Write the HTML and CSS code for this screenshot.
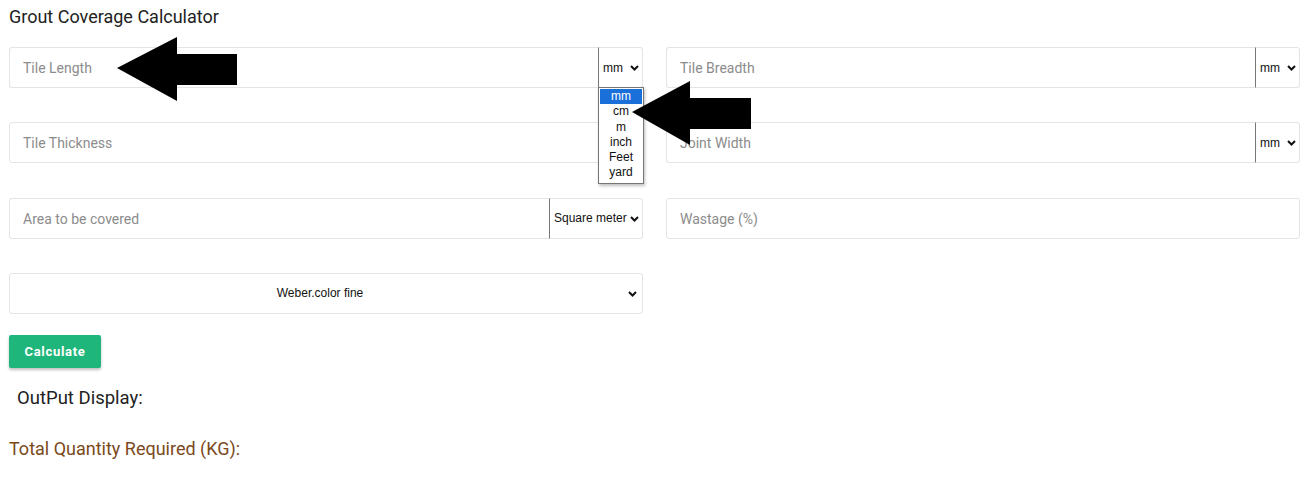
FILE: index.html
```html
<!DOCTYPE html>
<html lang="en">
<head>
<meta charset="utf-8">
<title>Grout Coverage Calculator</title>
<link rel="stylesheet" href="styles.css">
</head>
<body>
<div class="page">
  <h1 class="title">Grout Coverage Calculator</h1>
  <form class="grid">
    <div class="field">
      <div class="group">
        <input class="input" type="text" placeholder="Tile Length">
        <span class="unit-wrap unit-sm">
          <select class="unit"><option>mm</option><option>cm</option><option>m</option><option>inch</option><option>Feet</option><option>yard</option></select>
          <svg class="chev" width="9" height="6" viewBox="0 0 9 6"><path d="M1 1 L4.5 4.5 L8 1" fill="none" stroke="#111" stroke-width="2"/></svg>
        </span>
      </div>
      <div class="listbox">
        <div class="opt sel">mm</div>
        <div class="opt">cm</div>
        <div class="opt">m</div>
        <div class="opt">inch</div>
        <div class="opt">Feet</div>
        <div class="opt">yard</div>
      </div>
    </div>
    <div class="field">
      <div class="group">
        <input class="input" type="text" placeholder="Tile Breadth">
        <span class="unit-wrap unit-sm">
          <select class="unit"><option>mm</option><option>cm</option><option>m</option><option>inch</option><option>Feet</option><option>yard</option></select>
          <svg class="chev" width="9" height="6" viewBox="0 0 9 6"><path d="M1 1 L4.5 4.5 L8 1" fill="none" stroke="#111" stroke-width="2"/></svg>
        </span>
      </div>
    </div>
    <div class="field">
      <div class="group">
        <input class="input" type="text" placeholder="Tile Thickness">
      </div>
    </div>
    <div class="field">
      <div class="group">
        <input class="input" type="text" placeholder="Joint Width">
        <span class="unit-wrap unit-sm">
          <select class="unit"><option>mm</option><option>cm</option><option>m</option><option>inch</option><option>Feet</option><option>yard</option></select>
          <svg class="chev" width="9" height="6" viewBox="0 0 9 6"><path d="M1 1 L4.5 4.5 L8 1" fill="none" stroke="#111" stroke-width="2"/></svg>
        </span>
      </div>
    </div>
    <div class="field">
      <div class="group">
        <input class="input" type="text" placeholder="Area to be covered">
        <span class="unit-wrap unit-lg">
          <select class="unit"><option>Square meter</option><option>Square feet</option></select>
          <svg class="chev" width="9" height="6" viewBox="0 0 9 6"><path d="M1 1 L4.5 4.5 L8 1" fill="none" stroke="#111" stroke-width="2"/></svg>
        </span>
      </div>
    </div>
    <div class="field">
      <div class="group">
        <input class="input" type="text" placeholder="Wastage (%)">
      </div>
    </div>
    <div class="field">
      <span class="unit-wrap product-wrap">
        <select class="product"><option>Weber.color fine</option></select>
        <svg class="chev" width="9" height="6" viewBox="0 0 9 6"><path d="M1 1 L4.5 4.5 L8 1" fill="none" stroke="#111" stroke-width="2"/></svg>
      </span>
    </div>
  </form>
  <button class="btn" type="button">Calculate</button>
  <p class="output">OutPut Display:</p>
  <p class="total">Total Quantity Required (KG):</p>

  <svg class="annot" width="1311" height="479" viewBox="0 0 1311 479" aria-hidden="true">
    <polygon points="117,68 177,37 177,54 237,54 237,85 177,85 177,101" fill="#000"/>
    <polygon points="632,112 690,81 690,98 751,98 751,129 690,129 690,145" fill="#000"/>
  </svg>
</div>
</body>
</html>
```

FILE: styles.css
```css
* { box-sizing: border-box; }
html, body { margin: 0; padding: 0; background: #fff; }
body { font-family: Roboto, "Noto Sans", Arial, sans-serif; color: #222; }

.page { position: relative; padding: 0 11px 0 9px; width: 1311px; height: 479px; overflow: hidden; }

.title {
  margin: 0;
  padding-top: 7px;
  font-size: 18px;
  font-weight: 400;
  line-height: 20px;
  color: #222;
}

.grid {
  margin-top: 20px;
  display: grid;
  grid-template-columns: 634px 634px;
  column-gap: 23px;
  grid-auto-rows: 41px;
  row-gap: 34.33px;
}

.field { position: relative; }

.group {
  display: flex;
  height: 41px;
}

.input {
  flex: 1;
  min-width: 0;
  height: 41px;
  border: 1px solid #e4e4e4;
  border-radius: 3px;
  padding: 1px 14px 0 13px;
  font-family: Roboto, "Noto Sans", Arial, sans-serif;
  font-size: 14px;
  color: #333;
  outline: none;
  background: #fff;
}
.group .input:not(:last-child) { border-right: none; border-radius: 3px 0 0 3px; }
.input::placeholder { color: #8c8c8c; }

.unit-wrap { position: relative; display: block; height: 41px; }
.unit-sm { width: 45px; }
.unit-lg { width: 94px; }
.product-wrap { width: 634px; }

.chev { position: absolute; right: 4px; top: 18px; pointer-events: none; }

.unit {
  -webkit-appearance: none;
  appearance: none;
  width: 100%;
  height: 41px;
  border: 1px solid #e4e4e4;
  border-left: 1px solid #767676;
  border-radius: 0 3px 3px 0;
  background: #fff;
  font-family: "Liberation Sans", Arial, sans-serif;
  font-size: 12px;
  color: #111;
  padding: 0 0 0 4px;
  outline: none;
}

.product {
  -webkit-appearance: none;
  appearance: none;
  width: 100%;
  height: 41px;
  border: 1px solid #e4e4e4;
  border-radius: 3px;
  background: #fff;
  font-family: "Liberation Sans", Arial, sans-serif;
  font-size: 12px;
  color: #111;
  text-align: center;
  text-align-last: center;
  padding: 0 20px 0 8px;
  outline: none;
}
.product-wrap .chev { right: 6px; }

.listbox {
  position: absolute;
  left: 589px;
  top: 40px;
  width: 46px;
  padding: 1px 0 2px;
  background: #fff;
  border: 1px solid #767676;
  box-shadow: 1px 2px 3px rgba(0,0,0,0.25);
  z-index: 5;
  font-family: "Liberation Sans", Arial, sans-serif;
  font-size: 12px;
  color: #111;
}
.opt { height: 15.3px; line-height: 15px; text-align: center; }
.opt.sel { background: #1a6fd9; color: #fff; margin: 0 1px; }

.btn {
  display: block;
  margin-top: 21px;
  width: 92px;
  height: 33px;
  border: none;
  border-radius: 2px;
  background: #1fb67b;
  color: #fff;
  font-family: Roboto, "Noto Sans", Arial, sans-serif;
  font-weight: 700;
  font-size: 13px;
  letter-spacing: 0.7px;
  box-shadow: 0 2px 3px rgba(0,0,0,0.25);
  padding: 0;
}

.output {
  margin: 18px 0 0 8px;
  font-size: 18.5px;
  line-height: 24px;
  color: #222;
}

.total {
  margin: 27px 0 0 0;
  font-size: 18px;
  line-height: 24px;
  color: #7b4a1c;
}

.annot { position: absolute; left: 0; top: 0; z-index: 10; pointer-events: none; }
```
